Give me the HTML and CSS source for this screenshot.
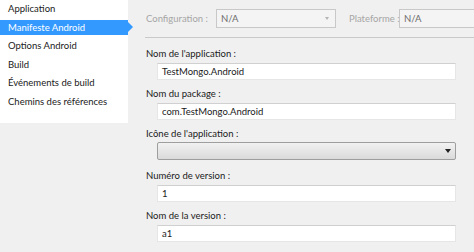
FILE: index.html
```html
<!DOCTYPE html>
<html>
<head>
<meta charset="utf-8">
<link rel="stylesheet" href="styles.css">
</head>
<body>
<div class="page">
  <nav class="sidebar">
    <div class="item">Application</div>
    <div class="item selected">Manifeste Android</div>
    <div class="item">Options Android</div>
    <div class="item">Build</div>
    <div class="item">Événements de build</div>
    <div class="item">Chemins des références</div>
  </nav>
  <main class="main">
    <div class="topbar">
      <span class="toplabel">Configuration :</span>
      <div class="combo"><span>N/A</span><span class="caret small"></span></div>
      <span class="toplabel plat">Plateforme :</span>
      <div class="combo wide"><span>N/A</span></div>
    </div>
    <div class="form">
      <label class="lbl">Nom de l'application :</label>
      <div class="field">TestMongo.Android</div>
      <label class="lbl">Nom du package :</label>
      <div class="field">com.TestMongo.Android</div>
      <label class="lbl gap">Icône de l'application :</label>
      <div class="dropdown"><span class="caret"></span></div>
      <label class="lbl">Numéro de version :</label>
      <div class="field">1</div>
      <label class="lbl">Nom de la version :</label>
      <div class="field">a1</div>
    </div>
  </main>
</div>
</body>
</html>
```

FILE: styles.css
```css
* { box-sizing: border-box; }
html, body { margin: 0; padding: 0; }
body {
  background: #f0f0f0;
  font-family: "Lato", "Noto Sans", sans-serif;
  font-size: 9.5px;
  color: #1a1a1a;
  width: 474px;
  height: 252px;
  overflow: hidden;
}
.page { display: flex; height: 252px; }
.sidebar {
  width: 128px;
  height: 123px;
  background: #ffffff;
  flex: none;
}
.item {
  height: 18.5px;
  line-height: 18.5px;
  padding-left: 8px;
  white-space: nowrap;
  position: relative;
}
.item.selected {
  background: #3399ff;
  color: #fff;
  height: 15px;
  line-height: 15px;
  margin: 1px 0 2.5px;
}
.item.selected::after {
  content: "";
  position: absolute;
  right: -5px;
  top: 2px;
  border-left: 5px solid #3399ff;
  border-top: 5.5px solid transparent;
  border-bottom: 5.5px solid transparent;
}
.main { flex: 1; padding-left: 17px; min-width: 0; }
.topbar {
  height: 38px;
  display: flex;
  align-items: center;
  border-bottom: 1px solid #c9c9c9;
  white-space: nowrap;
}
.toplabel { color: #a6a6a6; margin-left: 1px; width: 70px; flex: none; }
.toplabel.plat { margin-left: 13px; width: 50px; }
.combo {
  height: 19px;
  border: 1px solid #c8c8c8;
  background: #f4f4f4;
  color: #6d6d6d;
  display: flex;
  align-items: center;
  justify-content: space-between;
  padding: 0 6px 0 4px;
  width: 120px;
  flex: none;
}
.combo.wide { width: 80px; border-right: none; }
.caret {
  width: 0; height: 0;
  border-left: 3px solid transparent;
  border-right: 3px solid transparent;
  border-top: 4px solid #222;
}
.caret.small { border-top-color: #b5b5b5; border-top-width: 3px; border-left-width: 2.5px; border-right-width: 2.5px; }
.form { padding-left: 1px; padding-top: 7px; }
.lbl { display: block; height: 17px; line-height: 17px; }
.lbl.gap { margin-top: 2px; }
.field {
  margin: 1px 0 5px 11px;
  width: 299px;
  height: 17px;
  background: #fff;
  border: 1px solid #e6e6e6;
  border-top-color: #d0d0d0;
  line-height: 15px;
  padding-left: 4px;
}
.dropdown {
  margin: 0 0 7px 11px;
  width: 299px;
  height: 18px;
  border: 1px solid #9e9e9e;
  border-radius: 2px;
  background: linear-gradient(#f2f2f2, #e6e6e6 50%, #dadada);
  display: flex;
  align-items: center;
  justify-content: flex-end;
  padding-right: 4px;
}
```
